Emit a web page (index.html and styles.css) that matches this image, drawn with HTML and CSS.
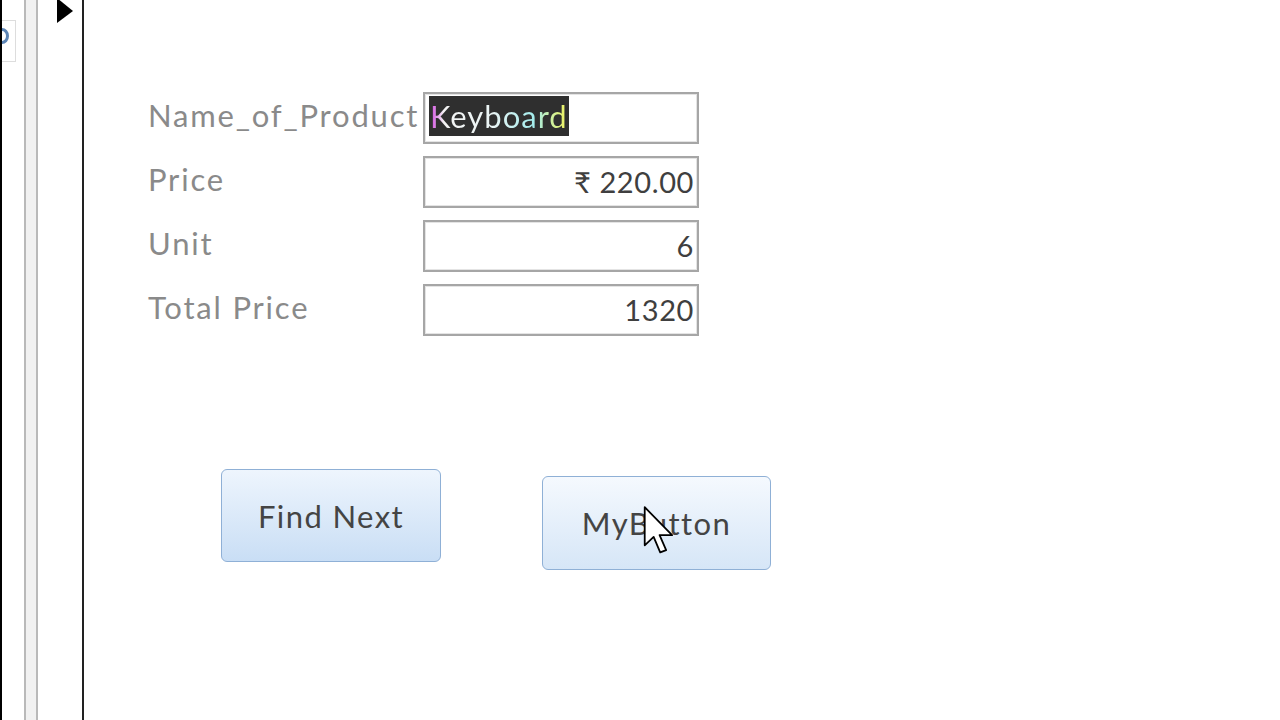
FILE: index.html
```html
<!DOCTYPE html>
<html lang="en">
<head>
  <meta charset="UTF-8">
  <title>Product Form</title>
  <link rel="stylesheet" href="styles.css">
</head>
<body>
  <div class="screen">
    <div class="chrome">
      <div class="edge"></div>
      <div class="nav-pane">
        <div class="nav-box"><span class="nav-ring"></span></div>
      </div>
      <div class="scroll-strip"></div>
      <div class="selector">
        <svg class="record-arrow" width="16" height="24" viewBox="0 0 16 24">
          <polygon points="0,-2 16,11 0,23" fill="#000"/>
        </svg>
      </div>
      <div class="divider"></div>
    </div>

    <div class="form">
      <div class="fields">
        <div class="label">Name_of_Product</div>
        <div class="field"><span class="selected"><span class="selected-text">Keyboard</span></span></div>

        <div class="label">Price</div>
        <div class="field num">₹ 220.00</div>

        <div class="label">Unit</div>
        <div class="field num">6</div>

        <div class="label">Total Price</div>
        <div class="field num">1320</div>
      </div>

      <div class="buttons">
        <div class="btn find">Find Next</div>
        <div class="btn mine">MyButton</div>
      </div>
    </div>

    <svg class="cursor" width="32" height="50" viewBox="0 0 26 42">
      <path d="M1 1 L1 33 L8.5 26 L14 39 L19 37 L13.5 24.5 L24 24.5 Z" fill="#fff" stroke="#000" stroke-width="1.5" stroke-linejoin="round"/>
    </svg>
  </div>
</body>
</html>
```

FILE: styles.css
```css
body {
  margin: 0;
  background: #fff;
  font-family: Lato, "Open Sans", sans-serif;
}

.screen {
  position: relative;
  display: flex;
  width: 1280px;
  height: 720px;
  overflow: hidden;
  background: #fff;
}

/* left chrome of the window */
.chrome {
  display: flex;
  height: 100%;
}

.edge {
  width: 2px;
  background: #000;
}

.nav-pane {
  width: 22px;
  padding-top: 20px;
}

.nav-box {
  width: 14px;
  height: 42px;
  border: 1px solid #ddd;
  border-left: none;
  display: flex;
  align-items: flex-start;
  padding-top: 7px;
  box-sizing: border-box;
  overflow: hidden;
}

.nav-ring {
  width: 14px;
  height: 16px;
  margin-left: -7px;
  border: 3px solid #5b84b5;
  border-radius: 50%;
  box-sizing: border-box;
}

.scroll-strip {
  width: 10px;
  border-left: 2px solid #b9b9b9;
  border-right: 2px solid #b9b9b9;
  background: #f1f1f1;
}

.selector {
  width: 44px;
  padding-left: 19px;
  box-sizing: border-box;
}

.record-arrow {
  display: block;
}

.divider {
  width: 2px;
  background: #222;
}

/* form body */
.form {
  flex: 1;
  padding-left: 64px;
  padding-top: 92px;
}

.fields {
  display: grid;
  grid-template-columns: 275px 276px;
  grid-auto-rows: 52px;
  row-gap: 12px;
}

.label {
  color: #8a8a8a;
  font-size: 31px;
  letter-spacing: 1.8px;
  line-height: 46px;
  white-space: nowrap;
}

.field {
  border: 2px solid #a6a6a6;
  box-shadow: inset 0 0 0 1px #e4e4e4;
  color: #3f3f3f;
  font-size: 29px;
  letter-spacing: 0.6px;
  line-height: 48px;
  padding: 0 3px;
  box-sizing: border-box;
  white-space: nowrap;
}

.num {
  text-align: right;
}

.selected {
  display: inline-block;
  background: #2f2f2f;
  margin-top: 2px;
  margin-left: 1px;
  padding: 0 1px 0 1px;
  vertical-align: top;
  line-height: 40px;
  font-size: 31px;
  letter-spacing: 1px;
}

.selected-text {
  color: #fff;
  background-image: linear-gradient(90deg, #d040e0 0%, #f4f4f4 10%, #eaf4f4 45%, #a4ecec 75%, #f2f25a 100%);
  -webkit-background-clip: text;
  background-clip: text;
  -webkit-text-fill-color: transparent;
}

.buttons {
  display: flex;
  align-items: flex-start;
  gap: 101px;
  margin-top: 133px;
  margin-left: 73px;
}

.btn {
  display: flex;
  align-items: center;
  justify-content: center;
  border: 1px solid #8fb0d6;
  border-radius: 6px;
  color: #444;
  font-size: 31px;
  letter-spacing: 1.4px;
  box-sizing: border-box;
}

.find {
  width: 220px;
  height: 93px;
  background: linear-gradient(#eef5fd, #c9def5);
}

.mine {
  width: 229px;
  height: 94px;
  margin-top: 7px;
  background: linear-gradient(#f5f9fe, #d6e6f7);
}

.cursor {
  position: absolute;
  left: 643px;
  top: 506px;
}
```
